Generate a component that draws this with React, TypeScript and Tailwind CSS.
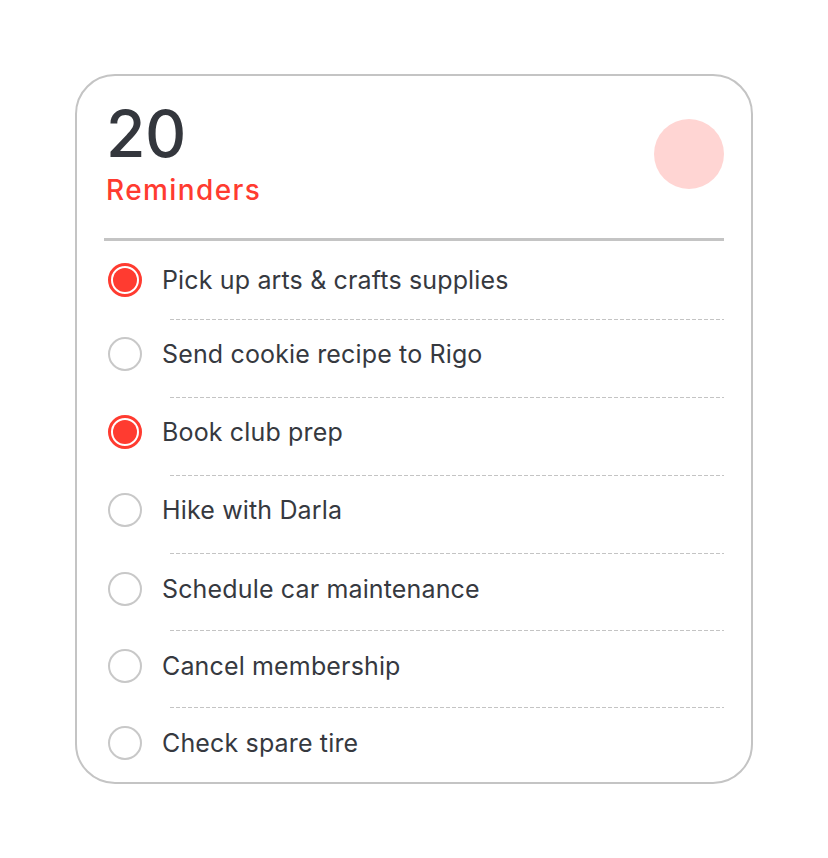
const reminders = [
  { title: "Pick up arts & crafts supplies", done: true },
  { title: "Send cookie recipe to Rigo", done: false },
  { title: "Book club prep", done: true },
  { title: "Hike with Darla", done: false },
  { title: "Schedule car maintenance", done: false },
  { title: "Cancel membership", done: false },
  { title: "Check spare tire", done: false },
];

function Radio({ checked }: { checked: boolean }) {
  if (checked) {
    return (
      <div className="w-[34px] h-[34px] shrink-0 rounded-full border-[3px] border-[#ff3b30] p-[2px]">
        <div className="w-full h-full rounded-full bg-[#ff3b30]" />
      </div>
    );
  }
  return <div className="w-[34px] h-[34px] shrink-0 rounded-full border-[2.5px] border-[#c8c8c8]" />;
}

export default function App() {
  return (
    <main
      className="min-h-screen bg-white flex items-center justify-center"
      style={{ fontFamily: "Inter, 'Noto Sans', sans-serif" }}
    >
      <div className="w-[678px] h-[710px] rounded-[40px] border-2 border-[#c4c4c4] bg-white px-[27px] pt-[26px]">
        {/* Header */}
        <div className="flex justify-between items-start">
          <div className="flex flex-col pl-[2px]">
            <span className="text-[64px] leading-[64px] font-medium tracking-[-0.5px] text-[#34373d]">20</span>
            <span className="mt-[10px] text-[28px] leading-[28px] font-medium tracking-[1.4px] text-[#ff3b30]">
              Reminders
            </span>
          </div>
          <div className="mt-[17px] w-[70px] h-[70px] rounded-full bg-[#ffd5d3]" />
        </div>

        <div className="mt-[34px] h-[3px] bg-[#c4c4c4]" />

        {/* List */}
        <ul className="flex flex-col">
          {reminders.map((item, i) => (
            <li key={item.title} className="flex flex-col">
              <div
                className={`flex items-center gap-[20px] pl-[4px] ${
                  i === 0 ? "pt-[22px] pb-[22px]" : i < 4 ? "pt-[17px] pb-[26px]" : "pt-[18px] pb-[24px]"
                }`}
              >
                <Radio checked={item.done} />
                <span className="text-[25px] leading-[34px] tracking-[0.15px] text-[#36393f]">{item.title}</span>
              </div>
              {i < reminders.length - 1 && (
                <div className="ml-[66px] h-px bg-[repeating-linear-gradient(90deg,#c4c4c4_0_4px,transparent_4px_6px)]" />
              )}
            </li>
          ))}
        </ul>
      </div>
    </main>
  );
}
